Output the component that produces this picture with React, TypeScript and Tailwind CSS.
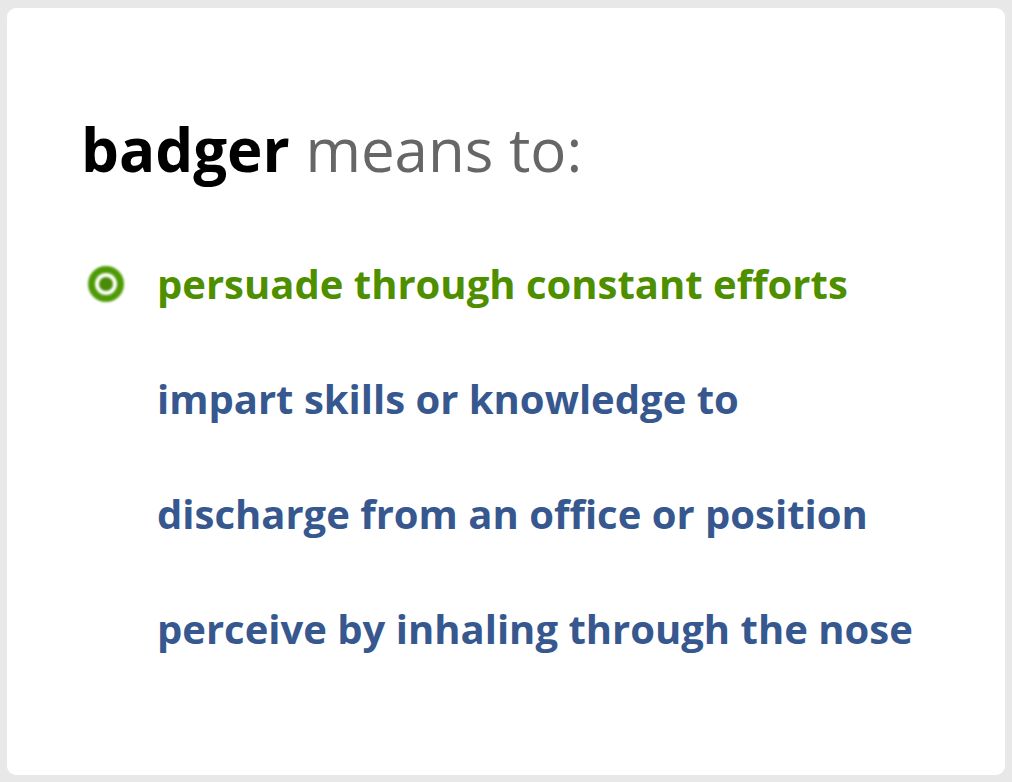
import React from 'react';

const options = [
  'persuade through constant efforts',
  'impart skills or knowledge to',
  'discharge from an office or position',
  'perceive by inhaling through the nose',
];

const RadioMark: React.FC = () => (
  <span className="absolute left-[-69px] top-1/2 -translate-y-1/2 flex items-center justify-center w-[36px] h-[36px] rounded-full bg-[#4e9a06] blur-[1px]">
    <span className="flex items-center justify-center w-[22px] h-[22px] rounded-full bg-white">
      <span className="w-[14px] h-[14px] rounded-full bg-[#4a8c08]" />
    </span>
  </span>
);

export default function App() {
  return (
    <div className="w-[1012px] h-[782px] bg-[#e8e8e8] p-[8px_7px_7px_7px] font-['Open_Sans',sans-serif]">
      <div className="h-full bg-white rounded-[9px] pl-[74px] pt-[101px]">
        <h1 className="text-[60px] leading-[80px]">
          <span className="font-bold text-black">badger</span>{' '}
          <span className="font-normal text-[#666666]">means to:</span>
        </h1>
        <ul className="mt-[70px] pl-[76px] flex flex-col gap-[65px]">
          {options.map((o, i) => (
            <li
              key={o}
              className={`relative text-[40px] leading-[50px] font-bold ${i === 0 ? 'text-[#4e8f00]' : 'text-[#36588f]'}`}
            >
              {i === 0 && <RadioMark />}
              {o}
            </li>
          ))}
        </ul>
      </div>
    </div>
  );
}
